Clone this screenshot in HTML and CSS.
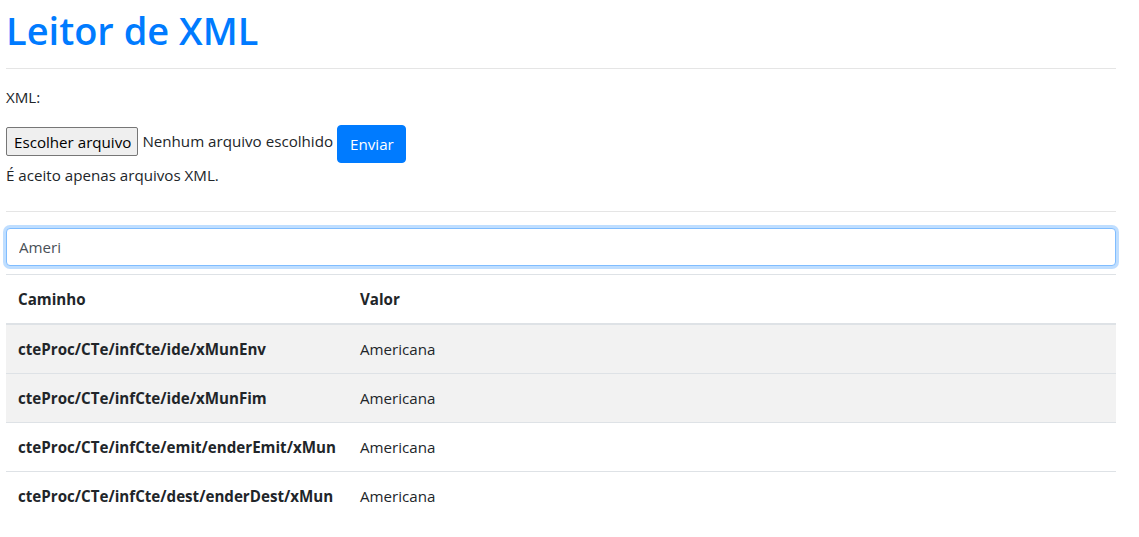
FILE: index.html
```html
<!DOCTYPE html>
<html lang="pt-BR">
<head>
<meta charset="utf-8">
<title>Leitor de XML</title>
<link rel="stylesheet" href="styles.css">
</head>
<body>
<div class="page">
  <h1 class="title">Leitor de XML</h1>
  <hr class="rule rule-top">
  <form class="upload">
    <label class="label">XML:</label>
    <div class="file-row">
      <span class="file-picker">
        <button type="button" class="file-btn">Escolher arquivo</button>
        <span class="file-name">Nenhum arquivo escolhido</span>
      </span>
      <button type="button" class="btn-primary">Enviar</button>
    </div>
    <p class="help">É aceito apenas arquivos XML.</p>
  </form>
  <hr class="rule rule-mid">
  <input class="search" type="text" value="Ameri">
  <table class="table">
    <thead>
      <tr><th class="col-path">Caminho</th><th>Valor</th></tr>
    </thead>
    <tbody>
      <tr class="shade"><th>cteProc/CTe/infCte/ide/xMunEnv</th><td>Americana</td></tr>
      <tr class="shade"><th>cteProc/CTe/infCte/ide/xMunFim</th><td>Americana</td></tr>
      <tr><th>cteProc/CTe/infCte/emit/enderEmit/xMun</th><td>Americana</td></tr>
      <tr><th>cteProc/CTe/infCte/dest/enderDest/xMun</th><td>Americana</td></tr>
    </tbody>
  </table>
</div>
</body>
</html>
```

FILE: styles.css
```css
* { box-sizing: border-box; }
html, body { margin: 0; padding: 0; background: #fff; }
body {
  font-family: "Open Sans", "Noto Sans", "Liberation Sans", sans-serif;
  font-size: 15.15px;
  line-height: 24px;
  color: #212529;
}
.page {
  width: 1110px;
  margin-left: 6px;
}
.title {
  margin: 6px 0 0 0;
  font-size: 38px;
  font-weight: 600;
  line-height: 48px;
  color: #007bff;
}
.rule {
  border: 0;
  border-top: 1px solid rgba(0,0,0,.1);
  margin: 0;
}
.rule-top { margin-top: 14px; }
.upload { margin: 16px 0 0 0; }
.label { display: block; margin-bottom: 16px; }
.file-row {
  display: flex;
  align-items: flex-start;
  gap: 4px;
}
.file-picker {
  display: flex;
  align-items: center;
  gap: 4px;
  margin-top: 2px;
}
.file-btn {
  font: inherit;
  line-height: 20px;
  color: #000;
  background: #efefef;
  border: 1px solid #767676;
  border-radius: 2px;
  padding: 3px 6px 3px 7px;
  height: 29px;
}
.file-name { line-height: 29px; }
.btn-primary {
  font: inherit;
  color: #fff;
  background: #007bff;
  border: 1px solid #007bff;
  border-radius: 4px;
  padding: 6px 11px 6px 12px;
  line-height: 24px;
  height: 38px;
}
.help { margin: 0; }
.rule-mid { margin-top: 24px; }
.search {
  display: block;
  width: 100%;
  height: 38px;
  margin-top: 16px;
  padding: 6px 12px;
  font: inherit;
  color: #495057;
  background: #fff;
  border: 1px solid #80bdff;
  border-radius: 4px;
  box-shadow: 0 0 0 3px rgba(0,123,255,.25);
  outline: 0;
}
.table {
  width: 100%;
  margin-top: 8px;
  border-collapse: collapse;
}
.table th, .table td {
  padding: 12px;
  text-align: left;
  vertical-align: top;
  border-top: 1px solid #dee2e6;
  line-height: 24px;
}
.table th { font-weight: 700; }
.table td { font-weight: 400; }
.table thead th { border-bottom: 2px solid #dee2e6; }
.col-path { width: 342px; }
.shade { background: rgba(0,0,0,.05); }
```
